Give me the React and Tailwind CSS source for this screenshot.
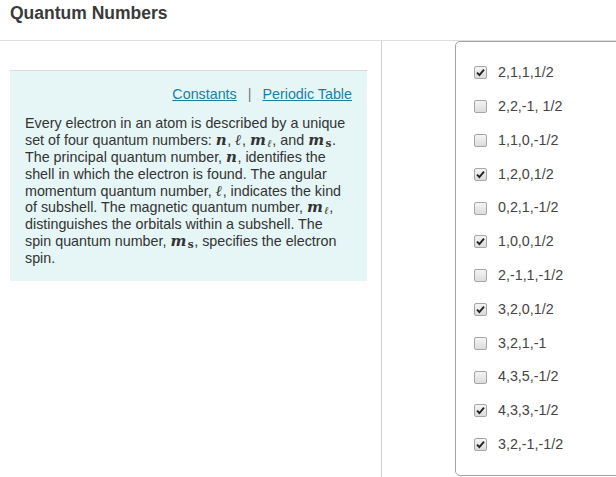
import React from "react";

const options = [
  { label: "2,1,1,1/2", checked: true },
  { label: "2,2,-1, 1/2", checked: false },
  { label: "1,1,0,-1/2", checked: false },
  { label: "1,2,0,1/2", checked: true },
  { label: "0,2,1,-1/2", checked: false },
  { label: "1,0,0,1/2", checked: true },
  { label: "2,-1,1,-1/2", checked: false },
  { label: "3,2,0,1/2", checked: true },
  { label: "3,2,1,-1", checked: false },
  { label: "4,3,5,-1/2", checked: false },
  { label: "4,3,3,-1/2", checked: true },
  { label: "3,2,-1,-1/2", checked: true },
];

// math symbol, roughly like the MathJax bold italic
function M({ children, sub, upright }) {
  return (
    <span className="font-['DejaVu_Serif',serif] italic font-bold text-[15px] leading-none text-[#333] tracking-[0.5px]">
      {children}
      {sub && (
        <span
          className={
            upright
              ? "text-[10.5px] font-bold not-italic relative top-[2px] ml-[1px]"
              : "text-[10.5px] font-bold relative top-[2px] ml-[1px]"
          }
        >
          {sub}
        </span>
      )}
    </span>
  );
}

function Checkbox({ checked }) {
  return (
    <span className="flex items-center justify-center w-[13px] h-[13px] rounded-[2px] border border-[#a6a6a6] bg-gradient-to-b from-[#f4f4f4] to-[#dcdcdc]">
      {checked && (
        <svg width="9" height="9" viewBox="0 0 9 9">
          <path d="M1 4.6 L3.4 7 L8 1.6" stroke="#222" strokeWidth="1.9" fill="none" />
        </svg>
      )}
    </span>
  );
}

export default function App() {
  return (
    <div className="w-[616px] h-[477px] overflow-hidden bg-white font-['Liberation_Sans',Arial,sans-serif]">
      <div className="h-[41px] border-b border-[#dedede] pl-[10px]">
        <h1 className="text-[17.5px] font-bold text-[#3a3a3a]">Quantum Numbers</h1>
      </div>

      <div className="flex h-[436px]">
        {/* left column */}
        <div className="w-[382px] shrink-0 border-r border-[#c8d2dc] pt-[29px] pl-[10px]">
          <div className="w-[357px] h-[211px] bg-[#e6f6f6] border-t border-[#dadada] pl-[15px] pr-[15px] pt-[13px]">
            <div className="text-right text-[14.3px] text-[#1b7ea5]">
              <a className="underline">Constants</a>
              <span className="text-[#777] mx-[11px]">|</span>
              <a className="underline">Periodic Table</a>
            </div>
            <p className="mt-[10px] text-[14.3px] leading-[16.8px] text-[#333]">
              Every electron in an atom is described by a unique set of four
              quantum numbers: <M>n</M>, <M>ℓ</M>, <M sub="ℓ">m</M>, and{" "}
              <M sub="s" upright>m</M>. The principal quantum number, <M>n</M>,
              identifies the shell in which the electron is found. The angular
              momentum quantum number, <M>ℓ</M>, indicates the kind of subshell.
              The magnetic quantum number, <M sub="ℓ">m</M>, distinguishes the
              orbitals within a subshell. The spin quantum number,{" "}
              <M sub="s" upright>m</M>, specifies the electron spin.
            </p>
          </div>
        </div>

        {/* right column */}
        <div className="pl-[73px]">
          <div className="w-[200px] h-[435px] border border-[#a3a3a3] rounded-[5px] pt-[14px] pl-[18px]">
            {options.map((o) => (
              <div key={o.label} className="flex items-center h-[33.8px]">
                <Checkbox checked={o.checked} />
                <span className="ml-[11px] text-[14.3px] text-[#444]">{o.label}</span>
              </div>
            ))}
          </div>
        </div>
      </div>
    </div>
  );
}
